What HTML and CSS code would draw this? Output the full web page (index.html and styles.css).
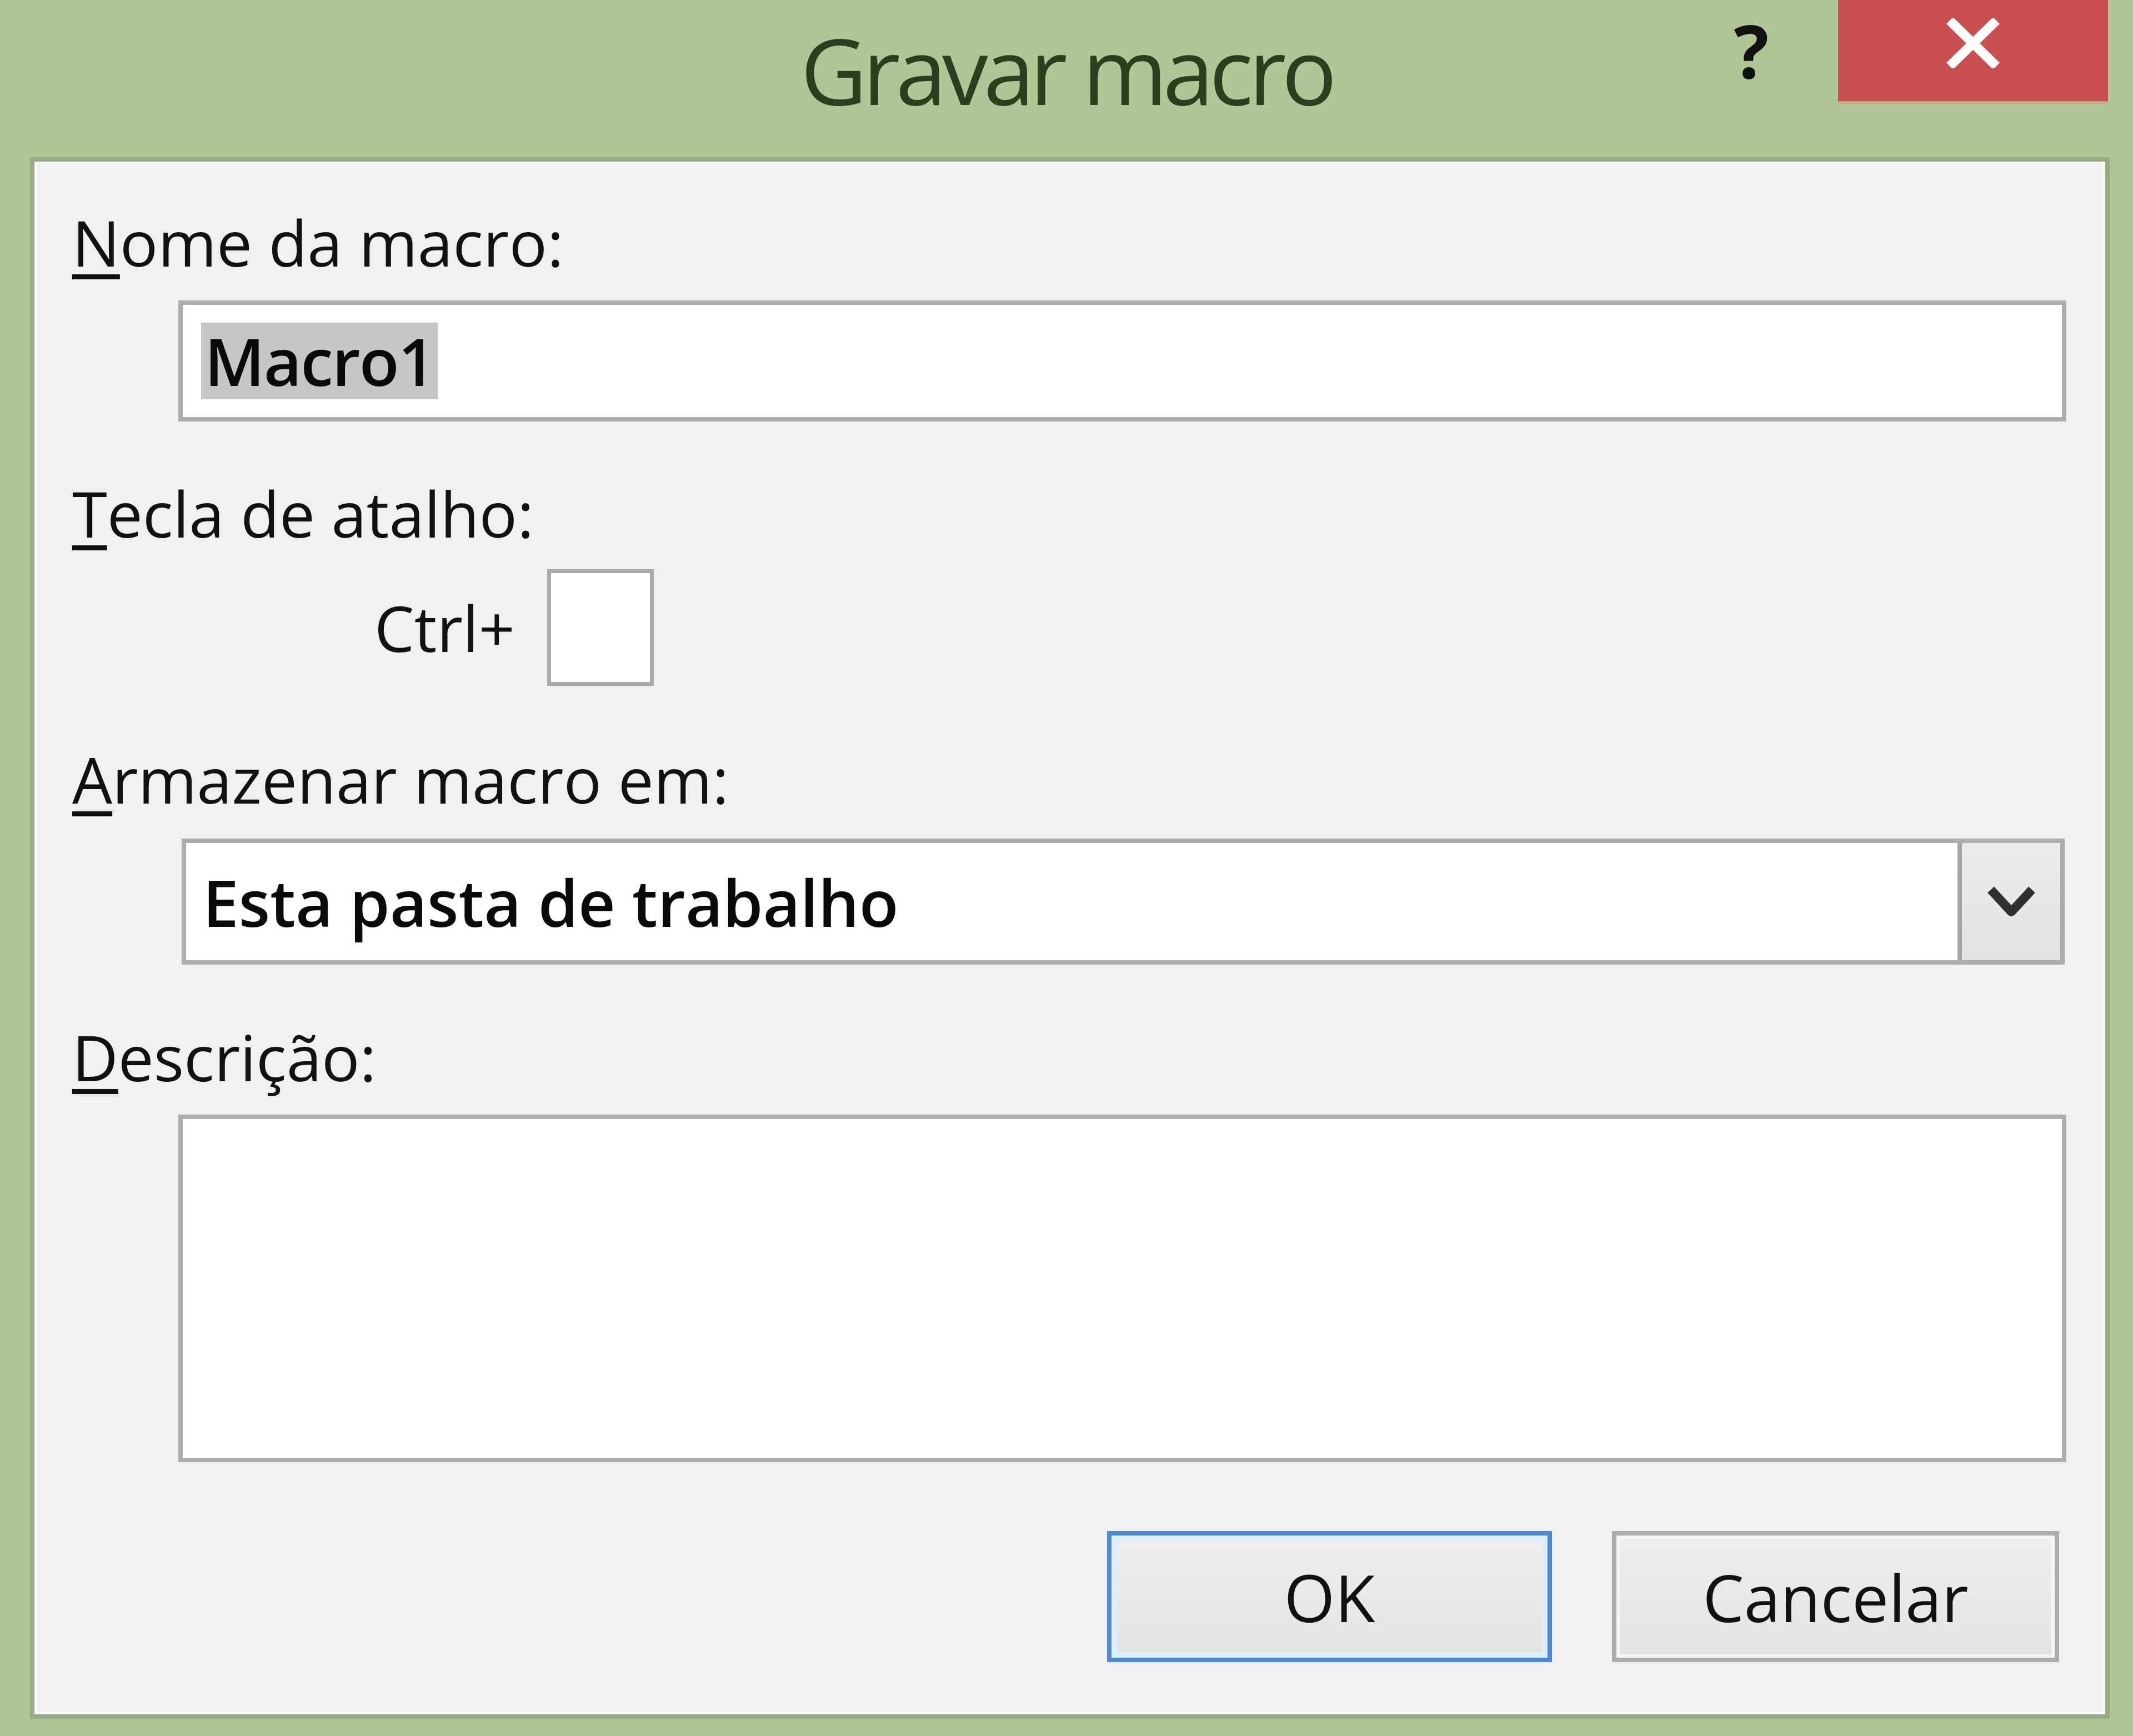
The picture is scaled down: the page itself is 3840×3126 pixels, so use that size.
FILE: index.html
```html
<!DOCTYPE html>
<html lang="pt">
<head>
<meta charset="utf-8">
<title>Gravar macro</title>
<link rel="stylesheet" href="styles.css">
</head>
<body>
<div class="window">
  <div class="titlebar">
    <div class="title">Gravar macro</div>
    <div class="controls">
      <div class="help">?</div>
      <div class="close">
        <svg width="100" height="90" viewBox="0 0 100 90"><path d="M8 4 L92 86 M92 4 L8 86" stroke="#ffffff" stroke-width="17" fill="none"/></svg>
      </div>
    </div>
  </div>
  <div class="panel">
    <div class="label first"><u>N</u>ome da macro:</div>
    <div class="input name"><span class="sel">Macro1</span></div>
    <div class="label l2"><u>T</u>ecla de atalho:</div>
    <div class="ctrl-row">
      <span class="ctrl">Ctrl+</span>
      <div class="keybox"></div>
    </div>
    <div class="label l3"><u>A</u>rmazenar macro em:</div>
    <div class="combo">
      <div class="combo-text">Esta pasta de trabalho</div>
      <div class="combo-btn">
        <svg width="90" height="60" viewBox="0 0 90 60"><path d="M8 8 L45 48 L82 8" stroke="#303030" stroke-width="16" fill="none" stroke-linejoin="round"/></svg>
      </div>
    </div>
    <div class="label l4"><u>D</u>escrição:</div>
    <div class="input desc"></div>
    <div class="buttons">
      <div class="btn ok">OK</div>
      <div class="btn cancel">Cancelar</div>
    </div>
  </div>
</div>
</body>
</html>
```

FILE: styles.css
```css
html, body {
  margin: 0;
  padding: 0;
}
body {
  background: #b0c694;
  font-family: "Open Sans", "Noto Sans", "DejaVu Sans", sans-serif;
  color: #111;
}
.window {
  width: 3840px;
  height: 3126px;
  box-sizing: border-box;
  padding: 0 42px 31px 54px;
  background: #b0c694;
  display: flex;
  flex-direction: column;
}
.titlebar {
  height: 283px;
  flex: none;
  display: grid;
  grid-template-columns: 1fr auto 1fr;
  margin: 0 -42px 0 -54px;
}
.title {
  grid-column: 2;
  font-size: 165px;
  line-height: 250px;
  letter-spacing: -8px;
  color: #2c3d20;
  white-space: nowrap;
}
.controls {
  grid-column: 3;
  justify-self: end;
  align-self: start;
  display: flex;
  padding-right: 45px;
}
.help {
  width: 130px;
  margin-right: 91px;
  text-align: center;
  font-size: 132px;
  font-weight: 700;
  line-height: 180px;
  color: #111;
}
.close {
  width: 486px;
  height: 187px;
  box-sizing: border-box;
  padding-bottom: 27px;
  background: #c8504e;
  border-bottom: 5px solid #cfa483;
  display: flex;
  align-items: center;
  justify-content: center;
}
.close svg { display: block; }
.panel {
  flex: 1;
  border: 8px solid #9aab83;
  background: #f0f0f0;
  box-shadow: inset 0 0 0 5px #f8faf5;
  display: flex;
  flex-direction: column;
}
.label {
  font-size: 114px;
  font-weight: 500;
  line-height: 160px;
  height: 160px;
  padding-left: 68px;
  white-space: nowrap;
}
.label u {
  text-decoration-thickness: 9px;
  text-underline-offset: 14px;
}
.label.first { margin-top: 65px; }
.label.l2 { margin-top: 85px; }
.label.l3 { margin-top: 88px; }
.label.l4 { margin-top: 86px; }
.input {
  background: #ffffff;
  border: 8px solid #adadad;
  box-sizing: border-box;
  margin-left: 259px;
  margin-right: 70px;
}
.input.name {
  margin-top: 25px;
  height: 218px;
  display: flex;
  align-items: center;
  padding-left: 33px;
}
.sel {
  display: inline-block;
  background: #c6c6c6;
  height: 138px;
  line-height: 138px;
  padding: 0 6px;
  font-size: 118px;
  font-weight: 600;
  letter-spacing: -2px;
  color: #0a0a0a;
}
.ctrl-row {
  margin-top: 21px;
  height: 210px;
  display: flex;
  align-items: center;
  padding-left: 612px;
}
.ctrl {
  font-size: 114px;
  font-weight: 500;
  line-height: 160px;
  margin-right: 58px;
}
.keybox {
  width: 192px;
  height: 210px;
  box-sizing: border-box;
  background: #ffffff;
  border: 7px solid #aaaaaa;
}
.combo {
  margin: 27px 73px 0 265px;
  height: 227px;
  box-sizing: border-box;
  border: 8px solid #adadad;
  background: #ffffff;
  display: flex;
}
.combo-text {
  flex: 1;
  display: flex;
  align-items: center;
  padding-left: 30px;
  font-size: 116px;
  font-weight: 600;
  color: #0a0a0a;
}
.combo-btn {
  width: 185px;
  box-sizing: border-box;
  border-left: 8px solid #a5a5a5;
  background: linear-gradient(#ececec, #e2e2e2);
  display: flex;
  align-items: center;
  justify-content: center;
}
.combo-btn svg { display: block; }
.input.desc {
  margin-top: 24px;
  height: 626px;
}
.buttons {
  margin-top: 124px;
  display: flex;
  justify-content: flex-end;
  gap: 108px;
  padding-right: 83px;
}
.btn {
  height: 236px;
  box-sizing: border-box;
  display: flex;
  align-items: center;
  justify-content: center;
  font-size: 118px;
  font-weight: 500;
  color: #111;
  background: linear-gradient(#efefef, #e3e3e3);
}
.btn.ok {
  width: 801px;
  border: 8px solid #4f88d2;
  box-shadow: inset 0 0 0 10px #dcf0fc;
}
.btn.cancel {
  width: 805px;
  border: 8px solid #acacac;
  box-shadow: inset 0 0 0 6px #f6f6f6;
}
```
